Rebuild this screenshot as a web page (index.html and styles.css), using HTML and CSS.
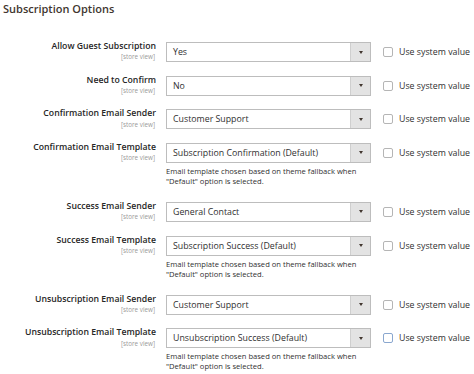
FILE: index.html
```html
<!DOCTYPE html>
<html lang="en">
<head>
  <meta charset="UTF-8">
  <title>Subscription Options</title>
  <link rel="stylesheet" href="styles.css">
</head>
<body>
  <div class="section">
    <h3 class="section-title">Subscription Options</h3>

    <div class="fields">
      <div class="field">
        <div class="label"><span class="name">Allow Guest Subscription</span><span class="scope">[store view]</span></div>
        <div class="control">
          <div class="select"><span class="value">Yes</span><span class="toggle"><i class="arrow"></i></span></div>
        </div>
        <label class="use-default"><span class="checkbox"></span>Use system value</label>
      </div>

      <div class="field">
        <div class="label"><span class="name">Need to Confirm</span><span class="scope">[store view]</span></div>
        <div class="control">
          <div class="select"><span class="value">No</span><span class="toggle"><i class="arrow"></i></span></div>
        </div>
        <label class="use-default"><span class="checkbox"></span>Use system value</label>
      </div>

      <div class="field">
        <div class="label"><span class="name">Confirmation Email Sender</span><span class="scope">[store view]</span></div>
        <div class="control">
          <div class="select"><span class="value">Customer Support</span><span class="toggle"><i class="arrow"></i></span></div>
        </div>
        <label class="use-default"><span class="checkbox"></span>Use system value</label>
      </div>

      <div class="field">
        <div class="label"><span class="name">Confirmation Email Template</span><span class="scope">[store view]</span></div>
        <div class="control">
          <div class="select"><span class="value">Subscription Confirmation (Default)</span><span class="toggle"><i class="arrow"></i></span></div>
          <p class="note">Email template chosen based on theme fallback when "Default" option is selected.</p>
        </div>
        <label class="use-default"><span class="checkbox"></span>Use system value</label>
      </div>

      <div class="field">
        <div class="label"><span class="name">Success Email Sender</span><span class="scope">[store view]</span></div>
        <div class="control">
          <div class="select"><span class="value">General Contact</span><span class="toggle"><i class="arrow"></i></span></div>
        </div>
        <label class="use-default"><span class="checkbox"></span>Use system value</label>
      </div>

      <div class="field">
        <div class="label"><span class="name">Success Email Template</span><span class="scope">[store view]</span></div>
        <div class="control">
          <div class="select"><span class="value">Subscription Success (Default)</span><span class="toggle"><i class="arrow"></i></span></div>
          <p class="note">Email template chosen based on theme fallback when "Default" option is selected.</p>
        </div>
        <label class="use-default"><span class="checkbox"></span>Use system value</label>
      </div>

      <div class="field">
        <div class="label"><span class="name">Unsubscription Email Sender</span><span class="scope">[store view]</span></div>
        <div class="control">
          <div class="select"><span class="value">Customer Support</span><span class="toggle"><i class="arrow"></i></span></div>
        </div>
        <label class="use-default"><span class="checkbox"></span>Use system value</label>
      </div>

      <div class="field">
        <div class="label"><span class="name">Unsubscription Email Template</span><span class="scope">[store view]</span></div>
        <div class="control">
          <div class="select"><span class="value">Unsubscription Success (Default)</span><span class="toggle"><i class="arrow"></i></span></div>
          <p class="note">Email template chosen based on theme fallback when "Default" option is selected.</p>
        </div>
        <label class="use-default"><span class="checkbox focused"></span>Use system value</label>
      </div>
    </div>
  </div>
</body>
</html>
```

FILE: styles.css
```css
* {
  box-sizing: border-box;
}

body {
  margin: 0;
  background: #fff;
  color: #303030;
  font-family: 'Open Sans', sans-serif;
}

.section {
  padding: 2px 0 0 3px;
}

.section-title {
  margin: 0 0 26px;
  font-size: 11px;
  line-height: 14px;
  font-weight: 600;
  color: #41362f;
}

.fields {
  display: flex;
  flex-direction: column;
  gap: 13.67px;
}

.field {
  display: grid;
  grid-template-columns: 153px 205px 1fr;
  column-gap: 10px;
  align-items: start;
}

/* label column */
.label {
  display: flex;
  flex-direction: column;
  align-items: flex-end;
  text-align: right;
}

.name {
  font-size: 8.7px;
  line-height: 9px;
  font-weight: 600;
  color: #262626;
  white-space: nowrap;
}

.scope {
  margin: 2.4px 1px 0 0;
  font-size: 6.3px;
  line-height: 7px;
  color: #999;
}

/* select */
.select {
  display: flex;
  height: 20px;
  border: 1px solid #bdbdbd;
  background: #fff;
}

.value {
  flex: 1;
  padding-left: 6px;
  font-size: 8.8px;
  line-height: 18px;
  color: #303030;
  white-space: nowrap;
  overflow: hidden;
}

.toggle {
  width: 20px;
  display: flex;
  justify-content: center;
  align-items: center;
  background: #e3e3e3;
  border-left: 1px solid #cfcfcf;
}

.arrow {
  width: 0;
  height: 0;
  border-top: 3px solid #41362f;
  border-left: 2.5px solid transparent;
  border-right: 2.5px solid transparent;
}

.note {
  margin: 3px 0 2.3px;
  font-size: 7.6px;
  line-height: 10px;
  color: #303030;
}

/* use system value */
.use-default {
  display: flex;
  align-items: center;
  height: 20px;
  margin-left: 2px;
  gap: 6px;
  font-size: 8.8px;
  color: #303030;
  white-space: nowrap;
}

.checkbox {
  width: 10px;
  height: 10px;
  border: 1px solid #b5b5b5;
  border-radius: 2px;
  background: #fff;
}

.checkbox.focused {
  border-color: #8aa7cf;
}
```
